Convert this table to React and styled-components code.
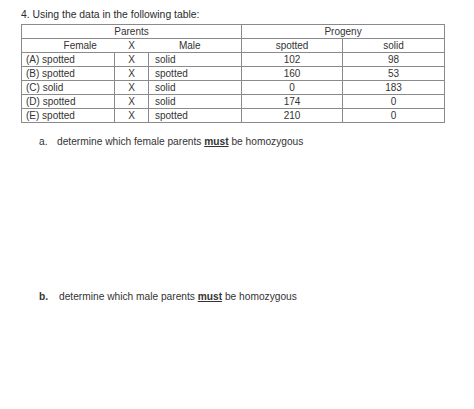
import React from 'react'
import styled, { createGlobalStyle } from 'styled-components'

const Global = createGlobalStyle`
  html, body {
    margin: 0;
    padding: 0;
    background: #fff;
  }
  body {
    font-family: "Liberation Sans", Arial, sans-serif;
    color: #2b2b2b;
  }
`

const Page = styled.div`
  width: 474px;
  height: 409px;
  padding: 8px 0 0 21px;
  box-sizing: border-box;
`

const Title = styled.div`
  font-size: 10.4px;
  line-height: 14px;
  height: 16px;
`

const Table = styled.table`
  border-collapse: collapse;
  table-layout: fixed;
  width: 423px;
  font-size: 10px;
  color: #333;
`

const Cell = styled.td`
  height: 13px;
  padding: 0 ${p => p.$pad || 0}px;
  line-height: 13px;
  border: 1px solid #8a8a8a;
  text-align: ${p => p.$align || 'center'};
  white-space: nowrap;
  ${p => p.$noLeft && 'border-left: none;'}
  ${p => p.$noRight && 'border-right: none;'}
`

const Question = styled.div`
  font-size: 10.2px;
  line-height: 13px;
  margin-top: ${p => p.$top}px;
  padding-left: 18px;
  display: flex;
  color: #333;
`

const Label = styled.span`
  width: ${p => p.$w}px;
  font-weight: ${p => (p.$bold ? 700 : 400)};
`

const Must = styled.span`
  font-weight: 700;
  text-decoration: underline;
`

const rows = [
  ['(A) spotted', 'solid', 102, 98],
  ['(B) spotted', 'spotted', 160, 53],
  ['(C) solid', 'solid', 0, 183],
  ['(D) spotted', 'solid', 174, 0],
  ['(E) spotted', 'spotted', 210, 0],
]

export default function App() {
  return (
    <Page>
      <Global />
      <Title>4. Using the data in the following table:</Title>
      <Table>
        <colgroup>
          <col style={{ width: 93 }} />
          <col style={{ width: 34 }} />
          <col style={{ width: 93 }} />
          <col style={{ width: 101 }} />
          <col style={{ width: 102 }} />
        </colgroup>
        <tbody>
          <tr>
            <Cell colSpan={3}>Parents</Cell>
            <Cell colSpan={2}>Progeny</Cell>
          </tr>
          <tr>
            <Cell $noRight style={{ paddingLeft: 24 }}>Female</Cell>
            <Cell $noLeft $noRight>X</Cell>
            <Cell $noLeft style={{ paddingRight: 10 }}>Male</Cell>
            <Cell>spotted</Cell>
            <Cell>solid</Cell>
          </tr>
          {rows.map(([female, male, spotted, solid]) => (
            <tr key={female}>
              <Cell $align="left" $pad={4}>{female}</Cell>
              <Cell>X</Cell>
              <Cell $align="left" $pad={6}>{male}</Cell>
              <Cell>{spotted}</Cell>
              <Cell>{solid}</Cell>
            </tr>
          ))}
        </tbody>
      </Table>
      <Question $top={12}>
        <Label $w={18}>a.</Label>
        <span>determine which female parents <Must>must</Must> be homozygous</span>
      </Question>
      <Question $top={142}>
        <Label $w={20} $bold>b.</Label>
        <span>determine which male parents <Must>must</Must> be homozygous</span>
      </Question>
    </Page>
  )
}
